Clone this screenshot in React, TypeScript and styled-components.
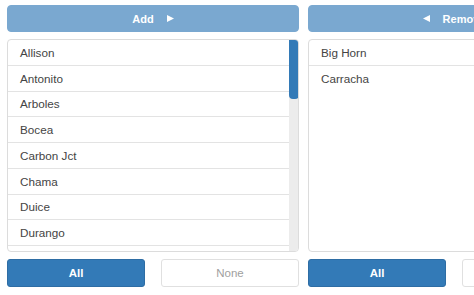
import React from "react";
import styled, { createGlobalStyle } from "styled-components";

const Global = createGlobalStyle`
  html, body { margin: 0; padding: 0; overflow: hidden; background: #fff; }
  body { font-family: "Liberation Sans", Arial, sans-serif; }
`;

const Page = styled.div`
  display: flex;
  gap: 9px;
  padding: 5px 0 0 7px;
  width: 700px;
`;

const Column = styled.div`
  width: 292px;
  flex: none;
  display: grid;
  grid-template-rows: 27px 213px 27.5px;
  row-gap: 7px;
`;

const MoveButton = styled.button`
  border: 1px solid #7aa8d0;
  border-radius: 4px;
  background: #7aa8d0;
  color: #fff;
  font-family: "Liberation Sans", Arial, sans-serif;
  font-weight: bold;
  font-size: 11px;
  display: flex;
  align-items: center;
  justify-content: center;
  gap: 13px;
  padding: 0;
  cursor: not-allowed;
`;

const ListBox = styled.div`
  border: 1px solid #dcdcdc;
  border-radius: 4px;
  overflow: hidden;
  background: #fff;
  display: flex;
`;

const Items = styled.div`
  flex: 1;
  min-width: 0;
  overflow: hidden;
`;

const ScrollTrack = styled.div`
  width: 10px;
  flex: none;
  background: #ececec;
  margin: -1px -1px -1px 0;
  display: flex;
  flex-direction: column;
`;

const ScrollThumb = styled.div`
  height: 60px;
  background: #337ab7;
  border-radius: 0 4px 4px 4px;
`;

const Row = styled.div<{ $continues?: boolean }>`
  height: 25.75px;
  box-sizing: border-box;
  display: flex;
  align-items: center;
  padding: 0 12px;
  font-size: 11.7px;
  color: #444;
  border-bottom: 1px solid #e3e3e3;
  &:last-child {
    border-bottom: ${(p) => (p.$continues ? "1px solid #e3e3e3" : "none")};
  }
`;

const Footer = styled.div`
  display: grid;
  grid-template-columns: 1fr 1fr;
  column-gap: 16px;
`;

const FooterButton = styled.button<{ $primary?: boolean }>`
  border-radius: 3px;
  font-family: "Liberation Sans", Arial, sans-serif;
  font-size: 11.5px;
  padding: 0;
  border: 1px solid ${(p) => (p.$primary ? "#2e6da4" : "#e0e0e0")};
  background: ${(p) => (p.$primary ? "#337ab7" : "#fff")};
  color: ${(p) => (p.$primary ? "#fff" : "#a0a0a0")};
  font-weight: ${(p) => (p.$primary ? "bold" : "normal")};
`;

const Triangle = ({ dir }: { dir: "left" | "right" }) => (
  <svg width="7" height="7" viewBox="0 0 7 7" aria-hidden="true">
    <polygon
      points={dir === "right" ? "0,0 7,3.5 0,7" : "7,0 0,3.5 7,7"}
      fill="#fff"
    />
  </svg>
);

const available = [
  "Allison", "Antonito", "Arboles", "Bocea", "Carbon Jct", "Chama", "Duice",
  "Durango",
];

const selected = ["Big Horn", "Carracha"];

export default function App() {
  return (
    <>
      <Global />
      <Page>
        <Column>
          <MoveButton disabled>
            <span>Add</span>
            <Triangle dir="right" />
          </MoveButton>
          <ListBox>
            <Items>
              {available.map((n) => (
                <Row key={n} $continues>
                  {n}
                </Row>
              ))}
            </Items>
            <ScrollTrack>
              <ScrollThumb />
            </ScrollTrack>
          </ListBox>
          <Footer>
            <FooterButton $primary>All</FooterButton>
            <FooterButton>None</FooterButton>
          </Footer>
        </Column>
        <Column>
          <MoveButton disabled>
            <Triangle dir="left" />
            <span>Remove</span>
          </MoveButton>
          <ListBox>
            <Items>
              {selected.map((n) => (
                <Row key={n}>{n}</Row>
              ))}
            </Items>
          </ListBox>
          <Footer>
            <FooterButton $primary>All</FooterButton>
            <FooterButton>None</FooterButton>
          </Footer>
        </Column>
      </Page>
    </>
  );
}
